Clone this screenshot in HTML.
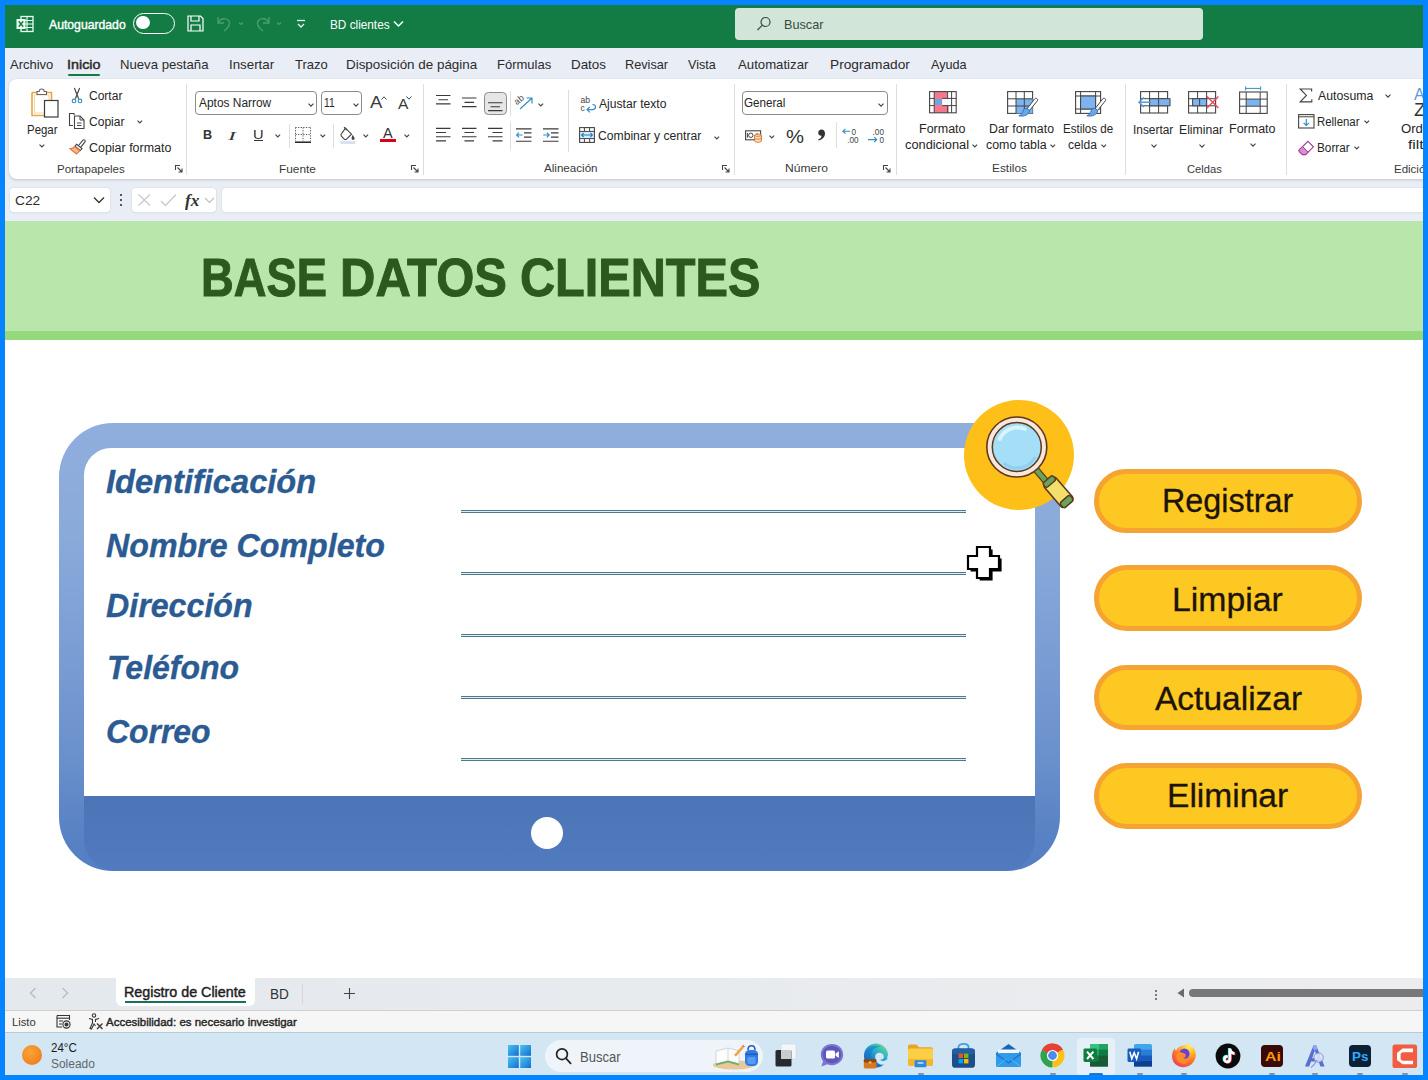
<!DOCTYPE html>
<html lang="es">
<head>
<meta charset="utf-8">
<title>BD clientes - Excel</title>
<style>
*{box-sizing:border-box;margin:0;padding:0}
html,body{width:1428px;height:1080px;overflow:hidden}
body{background:#fff;font-family:"Liberation Sans",sans-serif;position:relative;color:#222}
.abs{position:absolute}
svg{position:absolute;overflow:visible}
.t{position:absolute;white-space:nowrap;line-height:1;transform-origin:0 0}
#page{position:absolute;left:0;top:0;width:1428px;height:1080px;overflow:hidden;background:#fff}
#frame{position:absolute;left:0;top:0;width:1428px;height:1080px;border:5px solid #0683ff;z-index:100;pointer-events:none}
#titlebar{position:absolute;left:0;top:0;width:1428px;height:48px;background:#127c44}
#tabs{position:absolute;left:0;top:48px;width:1428px;height:31px;background:#e9edf5}
#ribbonbg{position:absolute;left:0;top:79px;width:1428px;height:142px;background:#e9edf5}
#ribbon{position:absolute;left:9px;top:79px;width:1430px;height:100px;background:#fff;border-radius:8px 0 0 8px;box-shadow:0 1px 3px rgba(0,0,0,.18)}
#banner{position:absolute;left:0;top:221px;width:1428px;height:110.5px;background:#b9e6aa}
#bannerline{position:absolute;left:0;top:331px;width:1428px;height:9px;background:#94d97c}
#sheetbar{position:absolute;left:0;top:978px;width:1428px;height:32px;background:linear-gradient(90deg,#e4e9ee 0%,#e8ebee 50%,#ececee 100%)}
#statusbar{position:absolute;left:0;top:1010px;width:1428px;height:22px;background:#f7f6f7;border-top:1px solid #cfcfcf}
#taskbar{position:absolute;left:0;top:1032px;width:1428px;height:48px;background:#d3e6f3;border-top:1px solid #bccad4}
/* sheet content */
#tablet{position:absolute;left:59px;top:423px;width:1001px;height:448px;border-radius:54px;background:linear-gradient(180deg,#90aedd 0%,#8aaada 25%,#7b9ed4 50%,#6a90cc 75%,#5a83c5 90%,#547ec2 100%)}
#tabbar{position:absolute;left:84px;top:796px;width:951px;height:75px;background:linear-gradient(180deg,#4c75b7,#527bbf);border-radius:0 0 32px 32px}
#screen{position:absolute;left:84px;top:448px;width:951px;height:348px;background:#fff;border-radius:27px 27px 0 0}
#homebtn{position:absolute;left:531px;top:817px;width:32px;height:32px;border-radius:50%;background:#fff}
.lbl{left:106px;font-size:32px;font-weight:bold;font-style:italic;color:#2b5b92}
.fl{position:absolute;left:461px;width:505px;height:3px;background:#d4f2f7;border-top:1px solid #52778a;border-bottom:1px solid #52778a}
#magcircle{position:absolute;left:964px;top:400px;width:110px;height:110px;border-radius:50%;background:#fdbf18}
.btn{position:absolute;left:1094px;width:268px;height:65px;border-radius:33px;background:#fec822;border:5px solid #f5a331}
.bt{font-size:31px;color:#1c1408}
/* chrome */
.sep{position:absolute;width:1px;background:#dcdcdc}
.box{position:absolute;background:#fff;border:1px solid #8c8c8c;border-radius:4px}
.fbox{position:absolute;background:#fff;border-radius:4px;box-shadow:0 0 0 1px #e1e4ea,0 1px 2px rgba(0,0,0,.10)}
#search{position:absolute;left:735px;top:8px;width:468px;height:32px;border-radius:4px;background:#d1e6d8}
#toggle{position:absolute;left:133px;top:13px;width:42px;height:20.5px;border-radius:10.5px;border:1.8px solid #fff}
#toggle i{position:absolute;left:2.4px;top:1.6px;width:13.6px;height:13.6px;border-radius:50%;background:#fff}
#inicioline{position:absolute;left:68px;top:74px;width:32px;height:2.4px;border-radius:1.5px;background:#127c44}
#acttab{position:absolute;left:116px;top:978px;width:139px;height:28px;background:#fff;border-radius:0 0 6px 6px}
#acttabline{position:absolute;left:125px;top:1000.5px;width:121px;height:2px;background:#1d6f57}
#tsearch{position:absolute;left:546px;top:1041px;width:216px;height:30px;border-radius:15px;background:#eef4fa;box-shadow:0 0 0 1px rgba(255,255,255,.6)}
#xlhl{position:absolute;left:1077px;top:1038px;width:38px;height:38px;border-radius:4px;background:#e7f0f7}
.ind{position:absolute;top:1072.5px;height:2.5px;width:6px;border-radius:1.5px;background:#8a9097}
#hthumb{position:absolute;left:1189px;top:989px;width:245px;height:8px;border-radius:4px;background:#787878}

</style>
</head>
<body>
<div id="page">
  <div id="titlebar"></div>
  <div id="tabs"></div>
  <div id="ribbonbg"></div>
  <div id="ribbon"></div>
  <div id="banner"></div>
  <div id="bannerline"></div>
  <!-- banner title -->
  <!-- tablet form -->
  <div id="tablet"></div>
  <div id="tabbar"></div>
  <div id="screen"></div>
  <div id="homebtn"></div>
  <div class="fl" style="top:510px"></div>
  <div class="fl" style="top:572px"></div>
  <div class="fl" style="top:634px"></div>
  <div class="fl" style="top:696px"></div>
  <div class="fl" style="top:758px"></div>
  <!-- magnifier -->
  <div id="magcircle"></div>
  <svg id="mag" class="abs" style="left:960px;top:395px" width="120" height="120" viewBox="0 0 120 120">
    <g transform="translate(56.8,52)">
      <line x1="17" y1="20" x2="34" y2="40" stroke="#5b3a1e" stroke-width="7" stroke-linecap="round"/>
      <line x1="17" y1="20" x2="34" y2="40" stroke="#6aa35c" stroke-width="4.5" stroke-linecap="round"/>
      <g transform="rotate(-41 40 44)">
        <rect x="33" y="31" width="15" height="30" rx="3" fill="#f3df6a" stroke="#5b3a1e" stroke-width="1.6"/>
        <rect x="34" y="55" width="13" height="7" rx="2.5" fill="#6aa35c" stroke="#5b3a1e" stroke-width="1.4"/>
        <rect x="34" y="29" width="13" height="6" rx="2" fill="#6aa35c" stroke="#5b3a1e" stroke-width="1.4"/>
      </g>
      <circle cx="0" cy="0" r="30" fill="#fbe6dc" stroke="#5b3a1e" stroke-width="1.6"/>
      <circle cx="0" cy="0" r="24.5" fill="#a5def7" stroke="#5b3a1e" stroke-width="1.5"/>
      <path d="M-17,-8 A19,19 0 0 1 8,-18" fill="none" stroke="#d9f3fd" stroke-width="4" stroke-linecap="round"/>
      <path d="M-12,17 A21,21 0 0 0 18,11" fill="none" stroke="#8fd0ee" stroke-width="3" stroke-linecap="round"/>
    </g>
  </svg>
  <!-- buttons -->
  <div class="btn" style="top:469px;height:64px"></div>
  <div class="btn" style="top:565px;height:66px"></div>
  <div class="btn" style="top:665px;height:65px"></div>
  <div class="btn" style="top:763px;height:66px"></div>
  <!-- cell cursor -->
  <svg class="abs" style="left:964px;top:543px" width="42" height="42" viewBox="0 0 42 42">
    <path d="M14,5 h13 v9 h9 v13 h-9 v9 h-13 v-9 h-9 v-13 h9 z" fill="#000" transform="translate(1.6,1.6)"/>
    <path d="M13,4 h13 v9 h9 v13 h-9 v9 h-13 v-9 h-9 v-13 h9 z" fill="#fff" stroke="#000" stroke-width="2.2" stroke-linejoin="miter"/>
  </svg>

  <div id="sheetbar"></div>
  <div id="statusbar"></div>
  <div id="taskbar"></div>
  <!-- ===== title bar ===== -->
  <svg style="left:16px;top:15px" width="18" height="18" viewBox="0 0 18 18">
    <rect x="5" y="1.5" width="12" height="15" fill="none" stroke="#e9fff1" stroke-width="1.3"/>
    <path d="M5,5.5H17M5,9H17M5,12.5H17M11,1.5V16.5" stroke="#e9fff1" stroke-width="1.1" fill="none"/>
    <rect x="0.5" y="4" width="9" height="10" fill="#e9fff1"/>
    <path d="M2.8,6.3L7.2,11.7M7.2,6.3L2.8,11.7" stroke="#127c44" stroke-width="1.5"/>
  </svg>
  <div id="toggle"><i></i></div>
  <svg style="left:187px;top:15px" width="17" height="17" viewBox="0 0 17 17" fill="none" stroke="#fff" stroke-width="1.2">
    <path d="M1,1H13.5L16,3.5V16H1Z"/><path d="M4,1V6H12V1"/><path d="M4,16V10H13V16"/>
  </svg>
  <svg style="left:216px;top:15px" width="30" height="18" viewBox="0 0 30 18" fill="none" stroke="#4f9c72" stroke-width="1.3">
    <path d="M2,2V8H8"/><path d="M2.5,7.5C4,3.5 10,2 13,6C15,9.5 12,13 8,16"/>
    <path d="M23,7.5l2,2l2,-2" stroke-width="1.1"/>
  </svg>
  <svg style="left:255px;top:15px" width="30" height="18" viewBox="0 0 30 18" fill="none" stroke="#4f9c72" stroke-width="1.3">
    <path d="M14,2V8H8"/><path d="M13.5,7.5C12,3.5 6,2 3,6C1,9.5 4,13 8,16"/>
    <path d="M22,7.5l2,2l2,-2" stroke-width="1.1"/>
  </svg>
  <svg style="left:296px;top:19px" width="10" height="10" viewBox="0 0 10 10" fill="none" stroke="#e6f5ec" stroke-width="1.3">
    <path d="M1,1.5H9"/><path d="M2,5l3,3l3,-3"/>
  </svg>
  <svg style="left:393px;top:20px" width="11" height="8" viewBox="0 0 11 8" fill="none" stroke="#fff" stroke-width="1.5"><path d="M1,1.5l4.5,4.5l4.5,-4.5"/></svg>
  <div id="search"></div>
  <svg style="left:756px;top:16px" width="16" height="16" viewBox="0 0 16 16" fill="none" stroke="#3b4a40" stroke-width="1.2"><circle cx="9.5" cy="6" r="4.5"/><path d="M6.2,9.3L1.5,14"/></svg>
  <div id="inicioline"></div>
  <!-- ===== formula bar ===== -->
  <div class="fbox" style="left:10px;top:188px;width:100px;height:24px"></div>
  <svg style="left:93px;top:196px" width="12" height="8" viewBox="0 0 12 8" fill="none" stroke="#333" stroke-width="1.3"><path d="M1,1.5l5,5l5,-5"/></svg>
  <svg style="left:119px;top:193px" width="4" height="14" viewBox="0 0 4 14" fill="#333"><circle cx="2" cy="2" r="1.1"/><circle cx="2" cy="7" r="1.1"/><circle cx="2" cy="12" r="1.1"/></svg>
  <div class="fbox" style="left:132px;top:188px;width:84px;height:24px"></div>
  <svg style="left:137px;top:193px" width="15" height="14" viewBox="0 0 15 14" fill="none" stroke="#c9c9c9" stroke-width="1.3"><path d="M1.5,1.5L13,12.5M13,1.5L1.5,12.5"/></svg>
  <svg style="left:160px;top:193px" width="17" height="14" viewBox="0 0 17 14" fill="none" stroke="#c9c9c9" stroke-width="1.3"><path d="M1,8L5.5,12.5L16,1.5"/></svg>
  <svg style="left:204px;top:197px" width="11" height="7" viewBox="0 0 11 7" fill="none" stroke="#bdbdbd" stroke-width="1.2"><path d="M1,1l4.5,4.5l4.5,-4.5"/></svg>
  <div class="fbox" style="left:222px;top:188px;width:1220px;height:24px"></div>
  <!-- ===== sheet tab bar ===== -->
  <div id="acttab"></div><div id="acttabline"></div>
  <svg style="left:29px;top:987px" width="8" height="12" viewBox="0 0 8 12" fill="none" stroke="#b7bcc2" stroke-width="1.4"><path d="M6.5,1L1.5,6L6.5,11"/></svg>
  <svg style="left:61px;top:987px" width="8" height="12" viewBox="0 0 8 12" fill="none" stroke="#b7bcc2" stroke-width="1.4"><path d="M1.5,1L6.5,6L1.5,11"/></svg>
  <div class="sep" style="left:302px;top:984px;height:20px;background:#d3d6da"></div>
  <svg style="left:343px;top:987px" width="13" height="13" viewBox="0 0 13 13" fill="none" stroke="#444" stroke-width="1.1"><path d="M6.5,1V12M1,6.5H12"/></svg>
  <svg style="left:1154px;top:989px" width="4" height="12" viewBox="0 0 4 12" fill="#444"><circle cx="2" cy="2" r="0.9"/><circle cx="2" cy="6" r="0.9"/><circle cx="2" cy="10" r="0.9"/></svg>
  <svg style="left:1177px;top:988px" width="8" height="10" viewBox="0 0 8 10" fill="#6b6b6b"><path d="M7,0.5V9.5L0.5,5Z"/></svg>
  <div id="hthumb"></div>
  <!-- ===== status bar ===== -->
  <svg style="left:56px;top:1014px" width="15" height="15" viewBox="0 0 15 15" fill="none" stroke="#333" stroke-width="1.1">
    <path d="M1,1.5H13.5V6"/><path d="M1,1.5V13H6"/><path d="M1,4.2H13.5"/><path d="M3,7H7M3,10H6"/>
    <circle cx="10.5" cy="10.5" r="3.6"/><circle cx="10.5" cy="10.5" r="1.5" fill="#333"/>
  </svg>
  <svg style="left:88px;top:1013px" width="16" height="17" viewBox="0 0 16 17" fill="none" stroke="#333" stroke-width="1.1">
    <circle cx="6" cy="2.5" r="1.7"/><path d="M1,5.5L4.5,6.5V10L2,15.5L3.5,16L6,11L7.5,13"/><path d="M11,5.5L7.5,6.5V9"/>
    <path d="M9,10.5L14.5,16M14.5,10.5L9,16" stroke-width="1.3"/>
  </svg>

<svg style="left:30px;top:87px" width="30" height="32" viewBox="0 0 30 32" >
<path d="M2,5.5H8M15,5.5H21.5V14M2,5.5V28.5H14" fill="none" stroke="#e9a646" stroke-width="1.6"/>
<path d="M4.5,8H19V14M4.5,8V26H14" fill="none" stroke="#f6d9a8" stroke-width="1.2"/>
<path d="M7,7.5V4.5H9.2C9.2,1.2 14.3,1.2 14.3,4.5H16.5V7.5Z" fill="#fff" stroke="#666" stroke-width="1.1"/>
<rect x="14.5" y="13.5" width="13.5" height="16.5" fill="#fff" stroke="#3b3b3b" stroke-width="1.2"/></svg>
<svg style="left:38.7px;top:143.6px" width="5.8" height="3.9" viewBox="0 0 5.8 3.9" ><path d="M0.5,0.6l2.4,2.4l2.4,-2.4" fill="none" stroke="#444" stroke-width="1.15"/></svg>
<svg style="left:71px;top:87px" width="12" height="17" viewBox="0 0 12 17" ><path d="M3.4,1L7.6,11.8M8.6,1L4.4,11.8" fill="none" stroke="#444" stroke-width="1.15"/>
<circle cx="3" cy="13.9" r="1.8" fill="none" stroke="#2f8fc4" stroke-width="1.1"/><circle cx="9" cy="13.9" r="1.8" fill="none" stroke="#2f8fc4" stroke-width="1.1"/></svg>
<svg style="left:68px;top:112px" width="18" height="18" viewBox="0 0 18 18" ><path d="M6,3V1.5H1.5V13.5H5" fill="none" stroke="#444" stroke-width="1.1"/>
<path d="M6.5,4H12L16,8V16.5H6.5Z" fill="#fff" stroke="#444" stroke-width="1.1"/><path d="M12,4V8H16" fill="none" stroke="#444" stroke-width="1"/>
<path d="M9,11H13.5M9,13.5H13.5" stroke="#444" stroke-width="1"/></svg>
<svg style="left:137px;top:120px" width="5.6" height="3.8" viewBox="0 0 5.6 3.8" ><path d="M0.5,0.6l2.3,2.3l2.3,-2.3" fill="none" stroke="#444" stroke-width="1.15"/></svg>
<svg style="left:69px;top:138px" width="18" height="17" viewBox="0 0 18 17" ><path d="M9.5,7.5L14,2.2C15,1 17,2.6 16,3.9L11.8,9.2" fill="#fff" stroke="#444" stroke-width="1.1"/>
<path d="M7.6,6.2L13,10.6L11.3,12.6L6,8.2Z" fill="#fff" stroke="#444" stroke-width="1.1"/>
<path d="M5.6,8.6L10.8,12.9L7.5,16L1,10.8C3,10.6 4.6,9.8 5.6,8.6Z" fill="#f7b98a" stroke="#e07b39" stroke-width="1.1"/></svg>
<svg style="left:175px;top:165.3px" width="8" height="8" viewBox="0 0 8 8" ><path d="M0.5,5V0.5H5" fill="none" stroke="#444" stroke-width="1.1"/><path d="M2.5,2.5L7,7M7,3.5V7H3.5" fill="none" stroke="#444" stroke-width="1.1"/></svg>
<div class="sep" style="left:186.3px;top:84px;height:91px;background:#dedede"></div>
<div class="box" style="left:195.4px;top:91px;width:122px;height:23.8px;"></div>
<svg style="left:308px;top:102.5px" width="6" height="4" viewBox="0 0 6 4" ><path d="M0.5,0.6l2.5,2.5l2.5,-2.5" fill="none" stroke="#444" stroke-width="1.15"/></svg>
<div class="box" style="left:320.6px;top:91px;width:41.9px;height:23.8px;"></div>
<svg style="left:353px;top:102.5px" width="6" height="4" viewBox="0 0 6 4" ><path d="M0.5,0.6l2.5,2.5l2.5,-2.5" fill="none" stroke="#444" stroke-width="1.15"/></svg>
<svg style="left:381.3px;top:95.6px" width="6" height="4" viewBox="0 0 6 4" ><path d="M0.5,3.5L3,0.8L5.5,3.5" fill="none" stroke="#444" stroke-width="1"/></svg>
<svg style="left:405.8px;top:96.2px" width="6" height="4" viewBox="0 0 6 4" ><path d="M0.5,0.5L3,3.2L5.5,0.5" fill="none" stroke="#444" stroke-width="1"/></svg>
<div class="abs" style="left:254px;top:139.6px;width:9px;height:1.2px;background:#333"></div>
<svg style="left:275px;top:134px" width="5.6" height="3.8" viewBox="0 0 5.6 3.8" ><path d="M0.5,0.6l2.3,2.3l2.3,-2.3" fill="none" stroke="#444" stroke-width="1.15"/></svg>
<div class="sep" style="left:288.5px;top:124px;height:24px;background:#dedede"></div>
<svg style="left:294.5px;top:126.5px" width="16" height="16" viewBox="0 0 16 16" ><path d="M0.5,0.5H15.5M0.5,0.5V14M15.5,0.5V14M8,0.5V14M0.5,7.5H15.5" fill="none" stroke="#555" stroke-width="1" stroke-dasharray="1.2 1.4"/>
<path d="M0,15.2H16" stroke="#222" stroke-width="1.5"/></svg>
<svg style="left:319.5px;top:134px" width="5.6" height="3.8" viewBox="0 0 5.6 3.8" ><path d="M0.5,0.6l2.3,2.3l2.3,-2.3" fill="none" stroke="#444" stroke-width="1.15"/></svg>
<div class="sep" style="left:332.7px;top:124px;height:24px;background:#dedede"></div>
<svg style="left:340px;top:126px" width="16" height="18" viewBox="0 0 16 18" ><path d="M5.5,2.2L11.5,8.2L6.8,12.8C6,13.6 4.8,13.6 4,12.8L1.6,10.4C0.8,9.6 0.8,8.4 1.6,7.6Z" fill="#fff" stroke="#444" stroke-width="1.1"/>
<path d="M4,1.2L6.8,4" stroke="#444" stroke-width="1.1"/>
<path d="M12.6,8.8C13.8,10.6 14.6,11.6 14.6,12.6C14.6,14.4 11.6,14.4 11.6,12.6C11.6,11.6 12,10.4 12.6,8.8Z" fill="#444"/>
<rect x="0.5" y="15" width="15" height="3" fill="#d9e2f3"/></svg>
<svg style="left:363px;top:134px" width="5.6" height="3.8" viewBox="0 0 5.6 3.8" ><path d="M0.5,0.6l2.3,2.3l2.3,-2.3" fill="none" stroke="#444" stroke-width="1.15"/></svg>
<div class="abs" style="left:380px;top:139.3px;width:16px;height:3.2px;background:#d9001b"></div>
<svg style="left:404px;top:134px" width="5.6" height="3.8" viewBox="0 0 5.6 3.8" ><path d="M0.5,0.6l2.3,2.3l2.3,-2.3" fill="none" stroke="#444" stroke-width="1.15"/></svg>
<svg style="left:410.8px;top:165.3px" width="8" height="8" viewBox="0 0 8 8" ><path d="M0.5,5V0.5H5" fill="none" stroke="#444" stroke-width="1.1"/><path d="M2.5,2.5L7,7M7,3.5V7H3.5" fill="none" stroke="#444" stroke-width="1.1"/></svg>
<div class="sep" style="left:422.6px;top:84px;height:91px;background:#dedede"></div>
<svg style="left:436px;top:0" width="16" height="200" viewBox="0 0 16 200"><path d="M0,95.5H14.5M2.5,99.7H12M0,103.8H14.5" stroke="#3a3a3a" stroke-width="1.15" fill="none"/></svg>
<svg style="left:462px;top:0" width="16" height="200" viewBox="0 0 16 200"><path d="M0,98H14.5M2.5,102.3H12M0,106.6H14.5" stroke="#3a3a3a" stroke-width="1.15" fill="none"/></svg>
<div class="box" style="left:483.5px;top:91.5px;width:23px;height:23px;background:#e6e6e6;border-color:#8c8c8c;border-radius:4.5px"></div>
<svg style="left:488px;top:0" width="16" height="200" viewBox="0 0 16 200"><path d="M0,102.7H14.5M2.5,106.7H12M0,110.6H14.5" stroke="#3a3a3a" stroke-width="1.15" fill="none"/></svg>
<div class="sep" style="left:509.7px;top:91px;height:25px;background:#dedede"></div>
<svg style="left:515px;top:94px" width="19" height="17" viewBox="0 0 19 17" ><text x="0.5" y="8.5" font-size="9" font-family="Liberation Sans" fill="#444" transform="rotate(-38 5 8)">ab</text>
<path d="M5,15L16.5,4.5M11.5,4H17V9.5" fill="none" stroke="#2f8fc4" stroke-width="1.2"/></svg>
<svg style="left:538px;top:103px" width="5.6" height="3.8" viewBox="0 0 5.6 3.8" ><path d="M0.5,0.6l2.3,2.3l2.3,-2.3" fill="none" stroke="#444" stroke-width="1.15"/></svg>
<div class="sep" style="left:568.4px;top:90px;height:62px;background:#dedede"></div>
<svg style="left:580px;top:95.5px" width="17" height="17" viewBox="0 0 17 17" ><text x="0.5" y="7.2" font-size="8.6" font-family="Liberation Sans" fill="#444">ab</text>
<text x="0.5" y="15" font-size="8.6" font-family="Liberation Sans" fill="#444">c</text>
<path d="M12.5,8.5C16.5,8.5 16.5,13.6 12.5,13.6H7.2M9.8,10.8L7,13.6L9.8,16.4" fill="none" stroke="#2f8fc4" stroke-width="1.2"/></svg>
<svg style="left:436px;top:0" width="16" height="200" viewBox="0 0 16 200"><path d="M0,128.4H14.5M0,132.5H10M0,136.7H14.5M0,140.8H10" stroke="#3a3a3a" stroke-width="1.15" fill="none"/></svg>
<svg style="left:462px;top:0" width="16" height="200" viewBox="0 0 16 200"><path d="M0,128.4H14.5M2.5,132.5H12M0,136.7H14.5M2.5,140.8H12" stroke="#3a3a3a" stroke-width="1.15" fill="none"/></svg>
<svg style="left:488px;top:0" width="16" height="200" viewBox="0 0 16 200"><path d="M0,128.4H14.5M4.5,132.5H14.5M0,136.7H14.5M4.5,140.8H14.5" stroke="#3a3a3a" stroke-width="1.15" fill="none"/></svg>
<div class="sep" style="left:509.7px;top:122px;height:28px;background:#dedede"></div>
<svg style="left:515.5px;top:127.5px" width="16" height="14" viewBox="0 0 16 14" ><path d="M0,0.8H15.5M8,4.9H15.5M8,9.1H15.5M0,13.2H15.5" stroke="#3a3a3a" stroke-width="1.15"/>
<path d="M6.5,7H0.8M3,4.6L0.6,7L3,9.4" fill="none" stroke="#2f8fc4" stroke-width="1.2"/></svg>
<svg style="left:542.5px;top:127.5px" width="16" height="14" viewBox="0 0 16 14" ><path d="M0,0.8H15.5M8,4.9H15.5M8,9.1H15.5M0,13.2H15.5" stroke="#3a3a3a" stroke-width="1.15"/>
<path d="M0.2,7H6M3.8,4.6L6.2,7L3.8,9.4" fill="none" stroke="#2f8fc4" stroke-width="1.2"/></svg>
<svg style="left:578.5px;top:126.5px" width="16" height="16" viewBox="0 0 16 16" ><rect x="0.6" y="0.6" width="14.8" height="14.8" fill="#fff" stroke="#444" stroke-width="1.1"/>
<rect x="0.6" y="4.4" width="14.8" height="7.2" fill="#d5ecfa" stroke="#444" stroke-width="1"/>
<path d="M5.4,0.6V4.4M10.6,0.6V4.4M5.4,11.6V15.4M10.6,11.6V15.4" stroke="#444" stroke-width="1"/>
<path d="M2.6,8H13.4M4.6,6L2.6,8L4.6,10M11.4,6L13.4,8L11.4,10" fill="none" stroke="#1f7fbf" stroke-width="1.1"/></svg>
<svg style="left:714px;top:135.5px" width="5.6" height="3.8" viewBox="0 0 5.6 3.8" ><path d="M0.5,0.6l2.3,2.3l2.3,-2.3" fill="none" stroke="#444" stroke-width="1.15"/></svg>
<svg style="left:722.3px;top:165.3px" width="8" height="8" viewBox="0 0 8 8" ><path d="M0.5,5V0.5H5" fill="none" stroke="#444" stroke-width="1.1"/><path d="M2.5,2.5L7,7M7,3.5V7H3.5" fill="none" stroke="#444" stroke-width="1.1"/></svg>
<div class="sep" style="left:733.5px;top:84px;height:91px;background:#dedede"></div>
<div class="box" style="left:742px;top:91px;width:146px;height:23.5px;"></div>
<svg style="left:877.5px;top:102.5px" width="6" height="4" viewBox="0 0 6 4" ><path d="M0.5,0.6l2.5,2.5l2.5,-2.5" fill="none" stroke="#444" stroke-width="1.15"/></svg>
<svg style="left:745px;top:130px" width="18" height="13" viewBox="0 0 18 13" ><rect x="0.6" y="0.8" width="15" height="9" fill="#fff" stroke="#444" stroke-width="1.1"/>
<circle cx="5.8" cy="5.3" r="2.2" fill="none" stroke="#444" stroke-width="1"/><path d="M2.4,3V7.6M12,3V5" stroke="#444" stroke-width="1"/>
<path d="M9.6,5.2C9.6,3.8 16.4,3.8 16.4,5.2V11C16.4,12.6 9.6,12.6 9.6,11Z" fill="#fbe3c8" stroke="#d9772e" stroke-width="1"/>
<path d="M9.6,5.2C9.6,6.6 16.4,6.6 16.4,5.2M9.6,8.1C9.6,9.5 16.4,9.5 16.4,8.1" fill="none" stroke="#d9772e" stroke-width="1"/></svg>
<svg style="left:769px;top:135px" width="5.6" height="3.8" viewBox="0 0 5.6 3.8" ><path d="M0.5,0.6l2.3,2.3l2.3,-2.3" fill="none" stroke="#444" stroke-width="1.15"/></svg>
<svg style="left:816.5px;top:129px" width="9" height="13" viewBox="0 0 9 13" ><path d="M4.4,0.6C6.6,0.6 8,2.2 8,4.6C8,8 5.4,10.6 1.6,11.6L1.2,10.6C3.4,9.6 4.4,8.4 4.6,6.8C2.8,7 1.2,5.8 1.2,3.8C1.2,2 2.6,0.6 4.4,0.6Z" fill="#333"/></svg>
<div class="sep" style="left:835.6px;top:122px;height:26px;background:#dedede"></div>
<svg style="left:841.5px;top:126.5px" width="18" height="17" viewBox="0 0 18 17" ><text x="9.6" y="7.5" font-size="8.2" font-family="Liberation Sans" fill="#444">0</text>
<text x="5.2" y="16" font-size="8.2" font-family="Liberation Sans" fill="#444">.00</text>
<path d="M8,4.2H1M3.4,1.8L0.9,4.2L3.4,6.6" fill="none" stroke="#2f8fc4" stroke-width="1.1"/></svg>
<svg style="left:866.5px;top:126.5px" width="18" height="17" viewBox="0 0 18 17" ><text x="5.6" y="7.5" font-size="8.2" font-family="Liberation Sans" fill="#444">.00</text>
<text x="12.6" y="16" font-size="8.2" font-family="Liberation Sans" fill="#444">0</text>
<path d="M1,12.6H9.6M7.2,10.2L9.7,12.6L7.2,15" fill="none" stroke="#2f8fc4" stroke-width="1.1"/></svg>
<svg style="left:883px;top:165.3px" width="8" height="8" viewBox="0 0 8 8" ><path d="M0.5,5V0.5H5" fill="none" stroke="#444" stroke-width="1.1"/><path d="M2.5,2.5L7,7M7,3.5V7H3.5" fill="none" stroke="#444" stroke-width="1.1"/></svg>
<div class="sep" style="left:895.8px;top:84px;height:91px;background:#dedede"></div>
<svg style="left:928.8px;top:91px" width="28" height="23" viewBox="0 0 28 23" ><rect x="0.6" y="0.6" width="26.6" height="21.2" fill="#fff"/>
<rect x="5.2" y="0.6" width="13" height="21.2" fill="#f4798b"/><rect x="18.2" y="14.6" width="1.4" height="7.2" fill="#f4798b"/>
<rect x="13.2" y="7.4" width="5.4" height="7" fill="#fff"/>
<rect x="5.8" y="8" width="7" height="5.8" fill="#6aa7e6"/>
<path d="M5.2,0.6V21.8M18.6,0.6V7.4M18.6,14.6V21.8M22.6,0.6V21.8M0.6,7.4H5.2M13.2,7.4H27.2M0.6,14.6H5.2M13.2,14.6H27.2" stroke="#444" stroke-width="1" fill="none"/>
<rect x="0.6" y="0.6" width="26.6" height="21.2" fill="none" stroke="#444" stroke-width="1.1"/></svg>
<svg style="left:972px;top:143.5px" width="5.6" height="3.8" viewBox="0 0 5.6 3.8" ><path d="M0.5,0.6l2.3,2.3l2.3,-2.3" fill="none" stroke="#444" stroke-width="1.15"/></svg>
<svg style="left:1007px;top:90.5px" width="32" height="27" viewBox="0 0 32 27" ><rect x="0.6" y="0.6" width="25" height="21.8" fill="#fff" stroke="#444" stroke-width="1.1"/>
<rect x="9" y="7.8" width="16.6" height="14.6" fill="#7db3ee"/>
<path d="M9,0.6V22.4M17.3,0.6V22.4M0.6,7.8H25.6M0.6,15H25.6" stroke="#444" stroke-width="1" fill="none"/>
<path d="M29.5,7.4C30.8,8 31,9 30.2,10L22.6,19.4L20.2,17.6L27.6,8C28.2,7.2 28.9,7.1 29.5,7.4Z" fill="#fff" stroke="#444" stroke-width="1"/>
<path d="M20,17.4L22.8,19.6C22,23.6 17.6,26 11.8,24.8C14.6,23.6 15.4,22 16,20C16.6,18 18.4,17 20,17.4Z" fill="#6aa7e6" stroke="#2d6fb5" stroke-width=".9"/></svg>
<svg style="left:1050px;top:143.5px" width="5.6" height="3.8" viewBox="0 0 5.6 3.8" ><path d="M0.5,0.6l2.3,2.3l2.3,-2.3" fill="none" stroke="#444" stroke-width="1.15"/></svg>
<svg style="left:1075px;top:90.5px" width="32" height="27" viewBox="0 0 32 27" ><rect x="0.6" y="0.6" width="25" height="21.8" fill="#fff" stroke="#444" stroke-width="1.1"/>
<path d="M5.6,0.6V22.4M20.6,0.6V22.4M0.6,5H25.6M0.6,18H25.6" stroke="#444" stroke-width="1" fill="none"/>
<rect x="5.6" y="5" width="15" height="13" fill="#7db3ee" stroke="#444" stroke-width="1"/>
<path d="M29.5,7.4C30.8,8 31,9 30.2,10L22.6,19.4L20.2,17.6L27.6,8C28.2,7.2 28.9,7.1 29.5,7.4Z" fill="#fff" stroke="#444" stroke-width="1"/>
<path d="M20,17.4L22.8,19.6C22,23.6 17.6,26 11.8,24.8C14.6,23.6 15.4,22 16,20C16.6,18 18.4,17 20,17.4Z" fill="#6aa7e6" stroke="#2d6fb5" stroke-width=".9"/></svg>
<svg style="left:1101px;top:143.5px" width="5.6" height="3.8" viewBox="0 0 5.6 3.8" ><path d="M0.5,0.6l2.3,2.3l2.3,-2.3" fill="none" stroke="#444" stroke-width="1.15"/></svg>
<div class="sep" style="left:1124.5px;top:84px;height:91px;background:#dedede"></div>
<svg style="left:1137.5px;top:90.5px" width="33" height="23" viewBox="0 0 33 23" ><rect x="2.6" y="0.6" width="27" height="21.4" fill="#fff" stroke="#444" stroke-width="1.1"/>
<path d="M11.6,0.6V22M20.6,0.6V22M2.6,7.7H29.6M2.6,14.8H29.6" stroke="#444" stroke-width="1" fill="none"/>
<rect x="11.6" y="7.7" width="20.4" height="7.1" fill="#7db3ee" stroke="#444" stroke-width="1"/><path d="M20.6,7.7V14.8" stroke="#444" stroke-width="1"/>
<path d="M13,11.2H1.4M6,6.4L1,11.2L6,16" fill="none" stroke="#5b9bd5" stroke-width="1.5"/></svg>
<svg style="left:1150.5px;top:143.5px" width="6" height="4" viewBox="0 0 6 4" ><path d="M0.5,0.6l2.5,2.5l2.5,-2.5" fill="none" stroke="#444" stroke-width="1.15"/></svg>
<svg style="left:1187.8px;top:90.5px" width="33" height="23" viewBox="0 0 33 23" ><rect x="0.6" y="0.6" width="27" height="21.4" fill="#fff" stroke="#444" stroke-width="1.1"/>
<path d="M9.6,0.6V22M18.6,0.6V22M0.6,7.7H27.6M0.6,14.8H27.6" stroke="#444" stroke-width="1" fill="none"/>
<rect x="4.6" y="7.7" width="14" height="7.1" fill="#7db3ee" stroke="#444" stroke-width="1"/><path d="M11.6,7.7V14.8" stroke="#444" stroke-width="1"/>
<path d="M19,5.4L30.4,17M30.4,5.4L19,17" fill="none" stroke="#e8465a" stroke-width="1.4"/></svg>
<svg style="left:1198.5px;top:143.5px" width="6" height="4" viewBox="0 0 6 4" ><path d="M0.5,0.6l2.5,2.5l2.5,-2.5" fill="none" stroke="#444" stroke-width="1.15"/></svg>
<svg style="left:1238.5px;top:85.5px" width="30" height="28" viewBox="0 0 30 28" ><path d="M6.6,2.4H21.6M6.6,0.4V4.4M21.6,0.4V4.4" stroke="#2f8fc4" stroke-width="1" fill="none"/>
<rect x="0.6" y="6" width="27.6" height="21.4" fill="#fff" stroke="#444" stroke-width="1.1"/>
<rect x="7.2" y="13.1" width="14" height="7.1" fill="#7db3ee"/>
<path d="M7.2,6V27.4M21.2,6V27.4M0.6,13.1H28.2M0.6,20.2H28.2" stroke="#444" stroke-width="1" fill="none"/></svg>
<svg style="left:1249.5px;top:142.5px" width="6" height="4" viewBox="0 0 6 4" ><path d="M0.5,0.6l2.5,2.5l2.5,-2.5" fill="none" stroke="#444" stroke-width="1.15"/></svg>
<div class="sep" style="left:1286px;top:84px;height:91px;background:#dedede"></div>
<svg style="left:1299px;top:88px" width="14" height="15" viewBox="0 0 14 15" ><path d="M12.6,3.4V1H1.2L7.4,7.4L1.2,13.8H12.8V11.2" fill="none" stroke="#444" stroke-width="1.15"/></svg>
<svg style="left:1385px;top:93.5px" width="6" height="4" viewBox="0 0 6 4" ><path d="M0.5,0.6l2.5,2.5l2.5,-2.5" fill="none" stroke="#444" stroke-width="1.15"/></svg>
<svg style="left:1297.5px;top:113.5px" width="17" height="15" viewBox="0 0 17 15" ><rect x="0.6" y="0.6" width="15.4" height="13.4" fill="#fff" stroke="#444" stroke-width="1.1"/><path d="M0.6,2.8H16" stroke="#444" stroke-width="1"/>
<path d="M8.3,5V11.4M5.6,8.8L8.3,11.5L11,8.8" fill="none" stroke="#2f8fc4" stroke-width="1.2"/></svg>
<svg style="left:1363.5px;top:120px" width="5.6" height="3.8" viewBox="0 0 5.6 3.8" ><path d="M0.5,0.6l2.3,2.3l2.3,-2.3" fill="none" stroke="#444" stroke-width="1.15"/></svg>
<svg style="left:1297.5px;top:139.5px" width="17" height="16" viewBox="0 0 17 16" ><path d="M10,1.4L15.4,6.8L7.6,14.6H4.4L1.4,11.6C0.8,11 0.8,10.2 1.4,9.6Z" fill="#fff" stroke="#a6379c" stroke-width="1.15"/>
<path d="M4.6,6.6L10.2,12.2L7.6,14.6H4.4L1.4,11.6C0.8,11 0.8,10.2 1.4,9.6Z" fill="#d98bd3" stroke="#a6379c" stroke-width="1"/></svg>
<svg style="left:1353.5px;top:146px" width="5.6" height="3.8" viewBox="0 0 5.6 3.8" ><path d="M0.5,0.6l2.3,2.3l2.3,-2.3" fill="none" stroke="#444" stroke-width="1.15"/></svg>
<svg style="left:1412px;top:86px" width="14" height="32" viewBox="0 0 14 32" ><text x="2" y="13.5" font-size="16" font-family="Liberation Sans" fill="#5b9bd5">A</text><text x="2" y="29.5" font-size="19" font-family="Liberation Sans" fill="#333">Z</text></svg>
  <!-- ===== taskbar ===== -->
  <div class="abs" style="left:22px;top:1045px;width:20px;height:20px;border-radius:50%;background:radial-gradient(circle at 40% 35%,#f9a43a 0%,#f48a22 55%,#ef6c1c 100%)"></div>
  <svg style="left:508px;top:1045px" width="23" height="23" viewBox="0 0 23 23">
    <defs><linearGradient id="wg" x1="0" y1="0" x2="1" y2="1"><stop offset="0" stop-color="#4cc2f1"/><stop offset="1" stop-color="#0f6fd1"/></linearGradient></defs>
    <rect x="0" y="0" width="10.8" height="10.8" fill="url(#wg)"/><rect x="12.2" y="0" width="10.8" height="10.8" fill="url(#wg)"/>
    <rect x="0" y="12.2" width="10.8" height="10.8" fill="url(#wg)"/><rect x="12.2" y="12.2" width="10.8" height="10.8" fill="url(#wg)"/>
  </svg>
  <div id="tsearch"></div>
  <svg style="left:555px;top:1047px" width="17" height="18" viewBox="0 0 17 18" fill="none" stroke="#222" stroke-width="1.7"><circle cx="7" cy="7.2" r="5.4"/><path d="M11,11.4L15.6,16.4" stroke-linecap="round"/></svg>
  <!-- search illustration: book + backpack -->
  <svg style="left:712px;top:1042px" width="48" height="28" viewBox="0 0 48 28">
    <ellipse cx="22" cy="23" rx="21" ry="4.5" fill="#e9c79a"/>
    <path d="M4,9L16,6L27,9V22L16,19L4,22Z" fill="#fdfdfb" stroke="#c9cbd0" stroke-width=".8"/>
    <path d="M16,6V19" stroke="#c9cbd0" stroke-width=".8"/>
    <path d="M4,21.5L16,18.6L27,21.5V23.4L16,20.6L4,23.4Z" fill="#6bb36b"/>
    <path d="M22,13L30,4L32,5.6L24,14.6Z" fill="#f2a23c"/><path d="M30,4L31,2.8L33,4.4L32,5.6Z" fill="#e8687a"/>
    <rect x="33" y="8" width="13" height="16" rx="4.5" fill="#2f7be6"/>
    <path d="M36,8C36,2.4 43,2.4 43,8" fill="none" stroke="#1f5fc4" stroke-width="1.6"/>
    <rect x="35.4" y="15" width="8.2" height="7" rx="1.6" fill="#5a9bf2"/>
    <rect x="33" y="11.5" width="13" height="1.6" fill="#1f5fc4"/>
  </svg>
  <!-- task view -->
  <svg style="left:775px;top:1043px" width="22" height="25" viewBox="0 0 22 25">
    <rect x="6" y="1" width="15" height="15" rx="1.5" fill="#f4f6f8" stroke="#d0d4d9" stroke-width=".6"/>
    <rect x="0.5" y="7" width="16" height="16.5" rx="1.5" fill="#26292e"/>
    <rect x="6" y="7" width="10.5" height="9" fill="#c8cbd0"/>
  </svg>
  <!-- chat -->
  <svg style="left:820px;top:1043px" width="24" height="25" viewBox="0 0 24 25">
    <path d="M12,1C18.4,1 23.2,5.6 23.2,11.6C23.2,17.6 18.4,22.2 12,22.2C10.4,22.2 8.8,21.9 7.4,21.3L1.4,23.6L3,18.2C1.6,16.4 0.8,14.1 0.8,11.6C0.8,5.6 5.6,1 12,1Z" fill="#7b74d6"/>
    <path d="M12,3C17.4,3 21.2,6.8 21.2,11.6C21.2,16.4 17.4,20.2 12,20.2C6.6,20.2 2.8,16.4 2.8,11.6C2.8,6.8 6.6,3 12,3Z" fill="#5d57b8"/>
    <rect x="6" y="7.6" width="9" height="8" rx="1.6" fill="#fff"/><path d="M15.6,10.4L18.8,8.2V15L15.6,12.8Z" fill="#fff"/>
  </svg>
  <!-- edge -->
  <svg style="left:863px;top:1043px" width="26" height="26" viewBox="0 0 26 26">
    <defs><linearGradient id="eg" x1=".9" y1=".05" x2=".2" y2=".95"><stop offset="0" stop-color="#6fdc8c"/><stop offset=".35" stop-color="#2fb6c4"/><stop offset=".65" stop-color="#1b86d6"/><stop offset="1" stop-color="#0d4fa0"/></linearGradient></defs>
    <circle cx="13" cy="12.6" r="12" fill="url(#eg)"/>
    <path d="M12.2,13.4C12.2,10.6 15.2,9.2 17.8,10C20.4,10.8 21.4,13 20.6,15C20,16.4 18.4,17 17,16.6C18.6,18.8 22.6,18.6 25.4,15.6C25.8,10 22,16 26,16L26,19C22,23 15.4,22.4 13,18C12.4,16.6 12.2,15 12.2,13.4Z" fill="#d3e6f3"/>
    <path d="M3.4,7.6C6.4,2.6 13,1.4 18,4.2C13.6,3.6 9,6 8,11.4C7.2,16 9.8,20.6 14.4,22.6C10,24.6 4.4,22.4 2.2,17.6C0.8,14.4 1.4,10.6 3.4,7.6Z" fill="#1a73c8" opacity=".55"/>
    <rect x="0.8" y="16" width="12.6" height="9.4" rx="1.3" fill="#d9791f"/><rect x="0.8" y="16" width="12.6" height="3.4" rx="1.3" fill="#8a4a14"/><rect x="5.8" y="18.4" width="2.6" height="2" fill="#f6c177"/>
  </svg>
  <!-- explorer -->
  <svg style="left:907px;top:1042px" width="27" height="27" viewBox="0 0 27 27">
    <path d="M1,4.5C1,3.4 1.8,2.6 2.9,2.6H9.4L12,5.2H24C25.1,5.2 26,6 26,7.2V8H1Z" fill="#e9a422"/>
    <rect x="1" y="6.6" width="25" height="17.4" rx="1.8" fill="#fbcf45"/>
    <path d="M1,17H26V22.2C26,23.2 25.2,24 24.2,24H2.8C1.8,24 1,23.2 1,22.2Z" fill="#f3b62c"/>
    <rect x="7.6" y="18.2" width="11.8" height="7" rx="1" fill="#2e8ae0"/><rect x="10.6" y="20.2" width="5.8" height="1.6" fill="#bfe0ff"/>
  </svg>
  <!-- store -->
  <svg style="left:951px;top:1042px" width="25" height="27" viewBox="0 0 25 27">
    <path d="M7.4,7V5.4C7.4,0.8 17.6,0.8 17.6,5.4V7" fill="none" stroke="#3aa0e8" stroke-width="1.8"/>
    <rect x="1" y="6.4" width="23" height="19.4" rx="3.4" fill="#1b4f8a"/>
    <rect x="1" y="6.4" width="23" height="6" rx="3" fill="#235fa2"/>
    <rect x="7.6" y="11.6" width="4.4" height="4.4" fill="#f25022"/><rect x="13" y="11.6" width="4.4" height="4.4" fill="#7fba00"/>
    <rect x="7.6" y="17" width="4.4" height="4.4" fill="#00a4ef"/><rect x="13" y="17" width="4.4" height="4.4" fill="#ffb900"/>
  </svg>
  <!-- mail -->
  <svg style="left:995px;top:1043px" width="27" height="25" viewBox="0 0 27 25">
    <path d="M1,10L13.5,1L26,10V12H1Z" fill="#1a67b8"/>
    <rect x="3" y="6.5" width="21" height="10" fill="#f2f7fc"/>
    <rect x="1" y="10" width="25" height="14" rx="1.2" fill="#2f9bea"/>
    <path d="M1,10L13.5,19L26,10V11.8L13.5,20.8L1,11.8Z" fill="#1b79cf"/>
    <path d="M1,24L11,16.2M26,24L16,16.2" stroke="#5cb6f5" stroke-width="1" fill="none"/>
  </svg>
  <!-- chrome -->
  <svg style="left:1040px;top:1043px" width="25" height="25" viewBox="0 0 25 25">
    <circle cx="12.5" cy="12.5" r="12" fill="#fff"/>
    <path d="M12.5,12.5L2.1,6.5A12,12 0 0 1 22.9,6.5Z" fill="#e74133"/>
    <path d="M12.5,12.5L22.9,6.5A12,12 0 0 1 12.5,24.5Z" fill="#fbc116"/>
    <path d="M12.5,12.5L12.5,24.5A12,12 0 0 1 2.1,6.5Z" fill="#2fa34f"/>
    <path d="M12.5,7H23.1A12,12 0 0 0 2.1,6.5L7.4,10Z" fill="#e74133"/>
    <circle cx="12.5" cy="12.5" r="5.6" fill="#fff"/><circle cx="12.5" cy="12.5" r="4.4" fill="#4a8cf0"/>
  </svg>
  <!-- excel -->
  <div id="xlhl"></div>
  <svg style="left:1083px;top:1043px" width="26" height="25" viewBox="0 0 26 25">
    <rect x="7" y="1" width="18" height="22.6" rx="1.6" fill="#21a366"/>
    <rect x="7" y="1" width="9" height="5.7" fill="#33c481"/><rect x="16" y="1" width="9" height="5.7" fill="#21a366"/>
    <rect x="7" y="6.7" width="9" height="5.6" fill="#21a366"/><rect x="16" y="6.7" width="9" height="5.6" fill="#107c41"/>
    <rect x="7" y="12.3" width="9" height="5.6" fill="#107c41"/><rect x="16" y="12.3" width="9" height="5.6" fill="#185c37"/>
    <rect x="7" y="17.9" width="18" height="5.7" fill="#185c37"/>
    <rect x="0.5" y="5.6" width="13.4" height="13.4" rx="1.4" fill="#107c41"/>
    <path d="M4,8.6L10.4,16M10.4,8.6L4,16" stroke="#fff" stroke-width="2"/>
  </svg>
  <div class="abs" style="left:1089px;top:1072.5px;width:14px;height:3px;border-radius:1.5px;background:#1f73d1"></div>
  <!-- word -->
  <svg style="left:1127px;top:1043px" width="26" height="25" viewBox="0 0 26 25">
    <rect x="7" y="1" width="18" height="22.6" rx="1.6" fill="#41a5ee"/>
    <rect x="7" y="6.7" width="18" height="5.6" fill="#2b7cd3"/><rect x="7" y="12.3" width="18" height="5.6" fill="#185abd"/><rect x="7" y="17.9" width="18" height="5.7" fill="#103f91"/>
    <rect x="0.5" y="5.6" width="13.4" height="13.4" rx="1.4" fill="#185abd"/>
    <path d="M2.8,8.8L4.8,15.8L7.2,9.6L9.6,15.8L11.6,8.8" fill="none" stroke="#fff" stroke-width="1.6"/>
  </svg>
  <!-- firefox -->
  <svg style="left:1171px;top:1042px" width="26" height="27" viewBox="0 0 26 27">
    <defs><radialGradient id="fg" cx=".72" cy=".12" r="1"><stop offset="0" stop-color="#fff36b"/><stop offset=".3" stop-color="#ffbd2e"/><stop offset=".6" stop-color="#ff7a2a"/><stop offset="1" stop-color="#ef3a55"/></radialGradient></defs>
    <path d="M12.4,3.6C14.4,3 16,2.8 17.4,1C18.6,3.2 22.4,4.8 24,8.6C26.4,14.6 23.4,22.8 15.4,24.8C7.4,26.6 1,21.2 1,14.2C1,10.2 2.6,7.4 4,6.2C4,7.4 4.4,8.4 5,9C6.2,6 9,4 12.4,3.6Z" fill="url(#fg)"/>
    <circle cx="13.4" cy="11.6" r="5.2" fill="#6a3fd6"/>
    <path d="M6.4,11.2C8,9.6 10.2,9.6 11.6,11C13.4,10.8 14.8,11.8 14.8,13.4C14.8,15 13.4,15.8 12,15.6C13.4,17.6 17,17.4 19,14.6C19.6,19 16.4,22 12.6,22C8.6,22 5.4,19 5.4,15C5.4,13.4 5.8,12.2 6.4,11.2Z" fill="#ff8a2a"/>
  </svg>
  <!-- tiktok -->
  <svg style="left:1215px;top:1043px" width="26" height="26" viewBox="0 0 26 26">
    <circle cx="13" cy="13" r="12.4" fill="#0b0b0b"/>
    <path d="M13.6,5.6H16.2C16.4,7.6 17.6,9 19.6,9.2V11.8C18.4,11.8 17.2,11.4 16.2,10.8V16C16.2,21.6 8.2,21.6 8.2,16.2C8.2,13.4 10.4,11.8 12.8,12.2V14.8C11.8,14.6 10.8,15.2 10.8,16.2C10.8,18.2 13.6,18.2 13.6,16Z" fill="#25f4ee" transform="translate(-.7,-.5)"/>
    <path d="M13.6,5.6H16.2C16.4,7.6 17.6,9 19.6,9.2V11.8C18.4,11.8 17.2,11.4 16.2,10.8V16C16.2,21.6 8.2,21.6 8.2,16.2C8.2,13.4 10.4,11.8 12.8,12.2V14.8C11.8,14.6 10.8,15.2 10.8,16.2C10.8,18.2 13.6,18.2 13.6,16Z" fill="#fe2c55" transform="translate(.7,.5)"/>
    <path d="M13.6,5.6H16.2C16.4,7.6 17.6,9 19.6,9.2V11.8C18.4,11.8 17.2,11.4 16.2,10.8V16C16.2,21.6 8.2,21.6 8.2,16.2C8.2,13.4 10.4,11.8 12.8,12.2V14.8C11.8,14.6 10.8,15.2 10.8,16.2C10.8,18.2 13.6,18.2 13.6,16Z" fill="#fff"/>
  </svg>
  <!-- illustrator -->
  <div class="abs" style="left:1261px;top:1045px;width:21.5px;height:21.5px;border-radius:4px;background:#3a0a08"></div>
  <!-- font app -->
  <svg style="left:1302px;top:1043px" width="26" height="26" viewBox="0 0 26 26">
    <path d="M3,23.4L11.6,2H14L22.6,23.4H18.4L16.6,18.6H9L7.2,23.4ZM10.2,15.2H15.4L12.8,7.6Z" fill="#5770cf" fill-rule="evenodd"/>
    <path d="M11.6,2H14L15.6,6L12.8,7.6L10.6,5Z" fill="#8fa4ea"/>
    <circle cx="16.6" cy="14.6" r="4.6" fill="#e4ebfb" fill-opacity=".85" stroke="#7d8fd8" stroke-width="1"/>
    <path d="M9,24.6C11.4,22.8 13.4,20.4 15,17" fill="none" stroke="#8f9be0" stroke-width="1.2"/>
  </svg>
  <!-- photoshop -->
  <div class="abs" style="left:1349px;top:1045px;width:21.5px;height:21.5px;border-radius:4px;background:#0b2036"></div>
  <!-- camtasia-like -->
  <svg style="left:1392px;top:1044px" width="26" height="25" viewBox="0 0 26 25">
    <rect x="0.5" y="0.5" width="24.6" height="23.6" rx="2.6" fill="#f25c45"/>
    <path d="M21,4.6H10.6L5,9V16L10.6,20.2H21V16.8H10.4L8.6,15.2V9.8L10.4,8.2H21Z" fill="#fff"/>
  </svg>
  <div class="ind" style="left:917.5px"></div>
  <div class="ind" style="left:1049.5px"></div>
  <div class="ind" style="left:1137px"></div>
  <div class="ind" style="left:1181px"></div>
  <div class="ind" style="left:1268.5px"></div>
  <div class="ind" style="left:1312px"></div>
  <div class="ind" style="left:1356.5px"></div>
  <div class="ind" style="left:1401.5px"></div>

<div class="t" style='left:49.00px;top:18.10px;font-size:13px;color:#fff;transform:scaleX(0.9390);-webkit-text-stroke:.4px #fff'>Autoguardado</div>
<div class="t" style='left:330.09px;top:18.10px;font-size:13px;color:#fff;transform:scaleX(0.9062);'>BD clientes</div>
<div class="t" style='left:784.03px;top:18.10px;font-size:13px;color:#3b4a40;transform:scaleX(0.9744);'>Buscar</div>
<div class="t" style='left:10.00px;top:58.10px;font-size:13px;color:#2b2b2b;transform:scaleX(1.0000);'>Archivo</div>
<div class="t" style='left:66.90px;top:58.10px;font-size:13px;color:#2b2b2b;transform:scaleX(1.1034);-webkit-text-stroke:.45px #2b2b2b'>Inicio</div>
<div class="t" style='left:119.99px;top:58.10px;font-size:13px;color:#2b2b2b;transform:scaleX(1.0116);'>Nueva pestaña</div>
<div class="t" style='left:228.98px;top:58.10px;font-size:13px;color:#2b2b2b;transform:scaleX(1.0233);'>Insertar</div>
<div class="t" style='left:295.00px;top:58.10px;font-size:13px;color:#2b2b2b;transform:scaleX(1.0000);'>Trazo</div>
<div class="t" style='left:345.97px;top:58.10px;font-size:13px;color:#2b2b2b;transform:scaleX(1.0317);'>Disposición de página</div>
<div class="t" style='left:497.00px;top:58.10px;font-size:13px;color:#2b2b2b;transform:scaleX(1.0000);'>Fórmulas</div>
<div class="t" style='left:570.97px;top:58.10px;font-size:13px;color:#2b2b2b;transform:scaleX(1.0303);'>Datos</div>
<div class="t" style='left:625.02px;top:58.10px;font-size:13px;color:#2b2b2b;transform:scaleX(0.9767);'>Revisar</div>
<div class="t" style='left:688.00px;top:58.10px;font-size:13px;color:#2b2b2b;transform:scaleX(0.9655);'>Vista</div>
<div class="t" style='left:738.00px;top:58.10px;font-size:13px;color:#2b2b2b;transform:scaleX(1.0145);'>Automatizar</div>
<div class="t" style='left:829.95px;top:58.10px;font-size:13px;color:#2b2b2b;transform:scaleX(1.0533);'>Programador</div>
<div class="t" style='left:931.00px;top:58.10px;font-size:13px;color:#2b2b2b;transform:scaleX(0.9730);'>Ayuda</div>
<div class="t" style='left:27.08px;top:123.52px;font-size:12.5px;color:#262626;transform:scaleX(0.9156);'>Pegar</div>
<div class="t" style='left:88.64px;top:90.02px;font-size:12.5px;color:#262626;transform:scaleX(0.9618);'>Cortar</div>
<div class="t" style='left:88.64px;top:116.02px;font-size:12.5px;color:#262626;transform:scaleX(0.9639);'>Copiar</div>
<div class="t" style='left:88.60px;top:142.02px;font-size:12.5px;color:#262626;transform:scaleX(0.9963);'>Copiar formato</div>
<div class="t" style='left:57.00px;top:163.87px;font-size:11.5px;color:#3a3a3a;transform:scaleX(1.0000);'>Portapapeles</div>
<div class="t" style='left:198.50px;top:97.02px;font-size:12.5px;color:#262626;transform:scaleX(0.9539);'>Aptos Narrow</div>
<div class="t" style='left:324.18px;top:97.02px;font-size:12.5px;color:#262626;transform:scaleX(0.8182);'>11</div>
<div class="t" style='left:370.00px;top:94.21px;font-size:17px;color:#3a3a3a;transform:scaleX(1.0909);'>A</div>
<div class="t" style='left:398.00px;top:96.75px;font-size:14px;color:#3a3a3a;transform:scaleX(1.1111);'>A</div>
<div class="t" style='left:202.56px;top:127.57px;font-size:13.5px;color:#333;transform:scaleX(0.9375);font-weight:bold'>B</div>
<div class="t" style='left:228.17px;top:128.60px;font-size:13px;color:#333;transform:scaleX(1.8333);font-style:italic;font-family:"Liberation Serif",serif'>I</div>
<div class="t" style='left:252.88px;top:127.60px;font-size:13px;color:#333;transform:scaleX(1.1250);'>U</div>
<div class="t" style='left:383.00px;top:125.83px;font-size:14.5px;color:#333;transform:scaleX(1.0000);'>A</div>
<div class="t" style='left:278.57px;top:163.57px;font-size:11.5px;color:#3a3a3a;transform:scaleX(1.0294);'>Fuente</div>
<div class="t" style='left:599.00px;top:97.82px;font-size:12.5px;color:#262626;transform:scaleX(0.9710);'>Ajustar texto</div>
<div class="t" style='left:598.03px;top:129.62px;font-size:12.5px;color:#262626;transform:scaleX(0.9714);'>Combinar y centrar</div>
<div class="t" style='left:543.50px;top:163.27px;font-size:11.5px;color:#3a3a3a;transform:scaleX(1.0094);'>Alineación</div>
<div class="t" style='left:744.07px;top:97.02px;font-size:12.5px;color:#262626;transform:scaleX(0.9302);'>General</div>
<div class="t" style='left:785.93px;top:126.52px;font-size:19px;color:#333;transform:scaleX(1.0667);'>%</div>
<div class="t" style='left:784.95px;top:163.47px;font-size:11.5px;color:#3a3a3a;transform:scaleX(1.0513);'>Número</div>
<div class="t" style='left:919.00px;top:122.82px;font-size:12.5px;color:#262626;transform:scaleX(1.0000);'>Formato</div>
<div class="t" style='left:905.48px;top:138.82px;font-size:12.5px;color:#262626;transform:scaleX(1.0246);'>condicional</div>
<div class="t" style='left:989.02px;top:122.82px;font-size:12.5px;color:#262626;transform:scaleX(0.9846);'>Dar formato</div>
<div class="t" style='left:985.51px;top:138.82px;font-size:12.5px;color:#262626;transform:scaleX(0.9917);'>como tabla</div>
<div class="t" style='left:1063.08px;top:122.82px;font-size:12.5px;color:#262626;transform:scaleX(0.9245);'>Estilos de</div>
<div class="t" style='left:1068.03px;top:138.82px;font-size:12.5px;color:#262626;transform:scaleX(0.9655);'>celda</div>
<div class="t" style='left:991.97px;top:163.47px;font-size:11.5px;color:#3a3a3a;transform:scaleX(1.0312);'>Estilos</div>
<div class="t" style='left:1133.05px;top:123.72px;font-size:12.5px;color:#262626;transform:scaleX(0.9512);'>Insertar</div>
<div class="t" style='left:1179.02px;top:123.72px;font-size:12.5px;color:#262626;transform:scaleX(0.9773);'>Eliminar</div>
<div class="t" style='left:1229.00px;top:123.02px;font-size:12.5px;color:#262626;transform:scaleX(1.0000);'>Formato</div>
<div class="t" style='left:1187.03px;top:163.57px;font-size:11.5px;color:#3a3a3a;transform:scaleX(0.9706);'>Celdas</div>
<div class="t" style='left:1318.00px;top:90.02px;font-size:12.5px;color:#262626;transform:scaleX(0.9821);'>Autosuma</div>
<div class="t" style='left:1317.09px;top:116.02px;font-size:12.5px;color:#262626;transform:scaleX(0.9130);'>Rellenar</div>
<div class="t" style='left:1317.06px;top:141.72px;font-size:12.5px;color:#262626;transform:scaleX(0.9412);'>Borrar</div>
<div class="t" style='left:1400.95px;top:122.82px;font-size:12.5px;color:#262626;transform:scaleX(1.0526);'>Ord</div>
<div class="t" style='left:1408.00px;top:138.82px;font-size:12.5px;color:#262626;transform:scaleX(1.2500);'>filt</div>
<div class="t" style='left:1394.00px;top:163.57px;font-size:11.5px;color:#3a3a3a;transform:scaleX(1.0000);'>Edició</div>
<div class="t" style='left:15.25px;top:194.00px;font-size:13px;color:#2b2b2b;transform:scaleX(1.0545);'>C22</div>
<div class="t" style='left:185.00px;top:193.06px;font-size:16px;color:#333;transform:scaleX(1.0769);font-style:italic;font-weight:bold;font-family:"Liberation Serif",serif'>fx</div>
<div class="t" style='left:123.98px;top:984.75px;font-size:14px;color:#1f1f1f;transform:scaleX(1.0212);-webkit-text-stroke:.45px #1f1f1f'>Registro de Cliente</div>
<div class="t" style='left:270.03px;top:987.25px;font-size:14px;color:#333;transform:scaleX(0.9722);'>BD</div>
<div class="t" style='left:11.58px;top:1016.89px;font-size:11px;color:#333;transform:scaleX(1.0182);'>Listo</div>
<div class="t" style='left:106.00px;top:1016.89px;font-size:11px;color:#262626;transform:scaleX(1.0437);-webkit-text-stroke:.4px #262626'>Accesibilidad: es necesario investigar</div>
<div class="t" style='left:51.08px;top:1042.02px;font-size:12.5px;color:#1b1b1b;transform:scaleX(0.9231);'>24°C</div>
<div class="t" style='left:51.04px;top:1058.02px;font-size:12.5px;color:#5f666c;transform:scaleX(0.9556);'>Soleado</div>
<div class="t" style='left:580.07px;top:1049.55px;font-size:14px;color:#555;transform:scaleX(0.9302);'>Buscar</div>
<div class="t" style='left:1265.00px;top:1051.04px;font-size:12px;color:#ff9a00;transform:scaleX(1.3182);font-weight:bold'>Ai</div>
<div class="t" style='left:1351.88px;top:1051.04px;font-size:12px;color:#31a8ff;transform:scaleX(1.1154);font-weight:bold'>Ps</div>
<div class="t" style='left:106.01px;top:465.27px;font-size:33px;color:#2b5b92;transform:scaleX(0.9881);font-weight:bold;font-style:italic;-webkit-text-stroke:.35px #2b5b92'>Identificación</div>
<div class="t" style='left:106.02px;top:529.07px;font-size:33px;color:#2b5b92;transform:scaleX(0.9754);font-weight:bold;font-style:italic;-webkit-text-stroke:.35px #2b5b92'>Nombre Completo</div>
<div class="t" style='left:106.03px;top:588.87px;font-size:33px;color:#2b5b92;transform:scaleX(0.9750);font-weight:bold;font-style:italic;-webkit-text-stroke:.35px #2b5b92'>Dirección</div>
<div class="t" style='left:107.06px;top:651.07px;font-size:33px;color:#2b5b92;transform:scaleX(0.9699);font-weight:bold;font-style:italic;-webkit-text-stroke:.35px #2b5b92'>Teléfono</div>
<div class="t" style='left:105.57px;top:714.67px;font-size:33px;color:#2b5b92;transform:scaleX(0.9667);font-weight:bold;font-style:italic;-webkit-text-stroke:.35px #2b5b92'>Correo</div>
<div class="t" style='left:200.51px;top:250.87px;font-size:54.5px;color:#2b5a1c;transform:scaleX(0.8313);font-weight:bold;-webkit-text-stroke:1px #2b5a1c'>BASE</div>
<div class="t" style='left:340.30px;top:250.87px;font-size:54.5px;color:#2b5a1c;transform:scaleX(0.8989);font-weight:bold;-webkit-text-stroke:1px #2b5a1c'>DATOS</div>
<div class="t" style='left:520.22px;top:250.87px;font-size:54.5px;color:#2b5a1c;transform:scaleX(0.8921);font-weight:bold;-webkit-text-stroke:1px #2b5a1c'>CLIENTES</div>
<div class="t" style='left:1161.61px;top:485.49px;font-size:32.5px;color:#1c1408;transform:scaleX(0.9954);-webkit-text-stroke:.3px #1c1408'>Registrar</div>
<div class="t" style='left:1172.42px;top:583.59px;font-size:32.5px;color:#1c1408;transform:scaleX(1.0404);-webkit-text-stroke:.3px #1c1408'>Limpiar</div>
<div class="t" style='left:1154.60px;top:682.79px;font-size:32.5px;color:#1c1408;transform:scaleX(1.0310);-webkit-text-stroke:.3px #1c1408'>Actualizar</div>
<div class="t" style='left:1167.24px;top:780.49px;font-size:32.5px;color:#1c1408;transform:scaleX(1.0322);-webkit-text-stroke:.3px #1c1408'>Eliminar</div>
</div>
<div id="frame"></div>
</body>
</html>
